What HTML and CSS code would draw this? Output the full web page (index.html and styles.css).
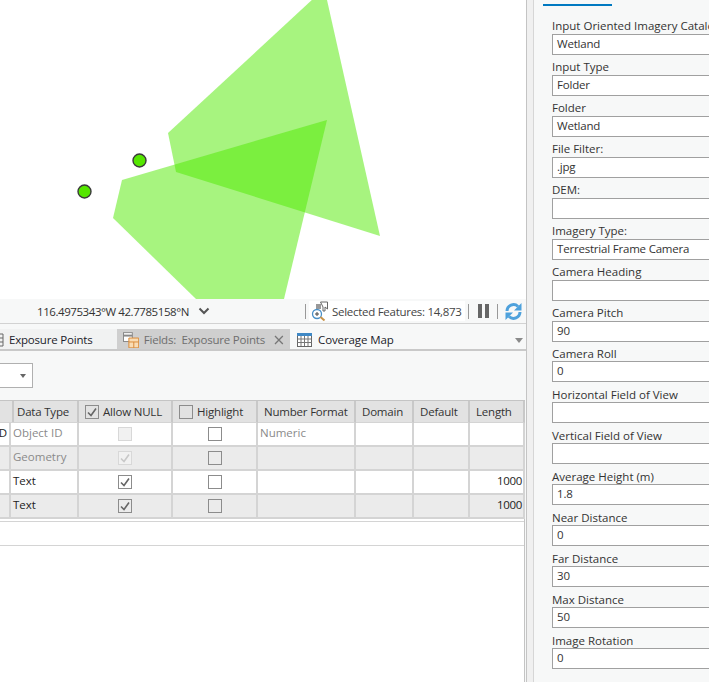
FILE: index.html
```html
<!DOCTYPE html>
<html lang="en">
<head>
<meta charset="utf-8">
<title>Fields: Exposure Points</title>
<link rel="stylesheet" href="styles.css">
</head>
<body>
<div class="app">
  <main class="main">
    <div class="map">
      <svg class="map-svg" width="526" height="299" viewBox="0 0 526 299">
        <polygon class="cov" points="168,133 314,-2 327,0 380,236 176,172"/>
        <polygon class="cov" points="122,180 327,120 284,299 196,299 113,218"/>
        <circle class="pt" cx="139.500" cy="160.500" r="6.500"/>
        <circle class="pt" cx="84.500" cy="191.500" r="6.500"/>
      </svg>
    </div>
    <div class="status">
      <span class="coords">116.4975343°W 42.7785158°N</span>
      <svg class="chev" width="12" height="8" viewBox="0 0 12 8"><path d="M1.500 1.500 6 6l4.500-4.500" fill="none" stroke="#555" stroke-width="2"/></svg>
      <span class="sep sep-a"></span>
      <span class="selected">
        <svg width="18" height="20" viewBox="0 0 18 20">
          <path d="M9.500 1h7v7l-2.500-2v4h-2V6z" fill="none" stroke="#666"/>
          <rect x="5" y="3" width="5" height="5" fill="#999"/>
          <circle cx="6" cy="13" r="4.500" fill="#fff" stroke="#4a90c8" stroke-width="1.300"/>
          <path d="M4 13h4M6 11v4" stroke="#444"/>
          <path d="M9.500 16l4 3.500" stroke="#c8934a" stroke-width="2"/>
        </svg>
        <span>Selected Features: 14,873</span>
      </span>
      <span class="sep"></span>
      <span class="pause"><i></i><i></i></span>
      <span class="sep"></span>
      <svg class="refresh" width="19" height="19" viewBox="0 0 19 19">
        <path d="M3 9A6.500 6.500 0 0 1 14 4.500M16 10A6.500 6.500 0 0 1 5 14.500" fill="none" stroke="#4ea1dc" stroke-width="3"/>
        <path d="M17.500 1V8.500H10zM1.500 18V10.500H9z" fill="#4ea1dc"/>
      </svg>
    </div>
    <div class="tabs">
      <div class="tab tab-first">
        <svg width="4" height="14" viewBox="0 0 4 14"><path d="M0 1h3v12H0M0 5h3M0 9h3" fill="none" stroke="#666"/></svg>
        <span>Exposure Points</span>
      </div>
      <div class="tab tab-active">
        <svg width="16" height="16" viewBox="0 0 16 16">
          <rect x="0.500" y="0.500" width="9" height="9" fill="#fff" stroke="#888"/>
          <path d="M.5 3.500h9" stroke="#888" stroke-width="2"/>
          <rect x="6" y="6" width="10" height="10" fill="#f9dcb4"/>
          <path d="M6 6h10v10H6zM6 10h10M11 10v6" fill="none" stroke="#d98b3a"/>
        </svg>
        <span class="tab-label">Fields:&nbsp; Exposure Points</span>
        <svg class="tab-x" width="10" height="10" viewBox="0 0 10 10"><path d="M1 1l8 8M9 1l-8 8" stroke="#777" stroke-width="1.300"/></svg>
      </div>
      <div class="tab tab-last">
        <svg width="15" height="14" viewBox="0 0 15 14">
          <rect x="0.500" y="0.500" width="14" height="13" fill="#fff" stroke="#666"/>
          <rect x="0" y="0" width="15" height="3" fill="#3f88c5"/>
          <path d="M0.500 6h14M0.500 9.500h14M4 3v10M7.500 3v10M11 3v10" stroke="#777"/>
        </svg>
        <span>Coverage Map</span>
      </div>
      <span class="tabs-menu"></span>
    </div>
    <div class="toolbar">
      <div class="combo"><span class="caret"></span></div>
    </div>
    <div class="grid">
      <div class="row head">
        <div class="cell"></div>
        <div class="cell">Data Type</div>
        <div class="cell"><span class="box"><svg width="12" height="12" viewBox="0 0 12 12"><path class="tick" d="M2 6.500l3 3 5-7"/></svg></span>Allow NULL</div>
        <div class="cell"><span class="box"></span>Highlight</div>
        <div class="cell">Number Format</div>
        <div class="cell">Domain</div>
        <div class="cell">Default</div>
        <div class="cell">Length</div>
      </div>
      <div class="row muted">
        <div class="cell clip">D</div>
        <div class="cell dim">Object ID</div>
        <div class="cell ctr"><span class="box box-off"></span></div>
        <div class="cell ctr"><span class="box"></span></div>
        <div class="cell dim">Numeric</div>
        <div class="cell"></div><div class="cell"></div><div class="cell"></div>
      </div>
      <div class="row alt muted">
        <div class="cell"></div>
        <div class="cell dim">Geometry</div>
        <div class="cell ctr"><span class="box box-off"><svg width="12" height="12" viewBox="0 0 12 12"><path class="tick tick-off" d="M2 6.500l3 3 5-7"/></svg></span></div>
        <div class="cell ctr"><span class="box"></span></div>
        <div class="cell"></div><div class="cell"></div><div class="cell"></div><div class="cell"></div>
      </div>
      <div class="row">
        <div class="cell"></div>
        <div class="cell">Text</div>
        <div class="cell ctr"><span class="box"><svg width="12" height="12" viewBox="0 0 12 12"><path class="tick" d="M2 6.500l3 3 5-7"/></svg></span></div>
        <div class="cell ctr"><span class="box"></span></div>
        <div class="cell"></div><div class="cell"></div><div class="cell"></div>
        <div class="cell num">1000</div>
      </div>
      <div class="row alt">
        <div class="cell"></div>
        <div class="cell">Text</div>
        <div class="cell ctr"><span class="box"><svg width="12" height="12" viewBox="0 0 12 12"><path class="tick" d="M2 6.500l3 3 5-7"/></svg></span></div>
        <div class="cell ctr"><span class="box"></span></div>
        <div class="cell"></div><div class="cell"></div><div class="cell"></div>
        <div class="cell num">1000</div>
      </div>
      <div class="new-row"></div>
    </div>
  </main>
  <div class="strip"></div>
  <aside class="pane">
    <div class="pane-tab"></div>
    <div class="form">
      <div class="field"><label>Input Oriented Imagery Catalog</label><div class="input">Wetland</div></div>
      <div class="field"><label>Input Type</label><div class="input">Folder</div></div>
      <div class="field"><label>Folder</label><div class="input">Wetland</div></div>
      <div class="field"><label>File Filter:</label><div class="input">.jpg</div></div>
      <div class="field"><label>DEM:</label><div class="input"></div></div>
      <div class="field"><label>Imagery Type:</label><div class="input">Terrestrial Frame Camera</div></div>
      <div class="field"><label>Camera Heading</label><div class="input"></div></div>
      <div class="field"><label>Camera Pitch</label><div class="input">90</div></div>
      <div class="field"><label>Camera Roll</label><div class="input">0</div></div>
      <div class="field"><label>Horizontal Field of View</label><div class="input"></div></div>
      <div class="field"><label>Vertical Field of View</label><div class="input"></div></div>
      <div class="field"><label>Average Height (m)</label><div class="input">1.8</div></div>
      <div class="field"><label>Near Distance</label><div class="input">0</div></div>
      <div class="field"><label>Far Distance</label><div class="input">30</div></div>
      <div class="field"><label>Max Distance</label><div class="input">50</div></div>
      <div class="field"><label>Image Rotation</label><div class="input">0</div></div>
    </div>
  </aside>
</div>
</body>
</html>
```
FILE: styles.css
```css
* { box-sizing: border-box; }
html, body { margin: 0; height: 100%; overflow: hidden; }
body { font-family: "Open Sans", "Noto Sans", sans-serif; font-size: 11.5px; color: #222; background: #fff; white-space: nowrap; }
.app { display: flex; width: 709px; height: 682px; overflow: hidden; }

.main { width: 527px; flex: none; display: flex; flex-direction: column; background: #f7f8f8; border-right: 1px solid #c4c4c4; }
.map { height: 299px; flex: none; background: #fff; overflow: hidden; }
.map-svg { display: block; }
.cov { fill: #50ea00; fill-opacity: .5; stroke: none; }
.pt { fill: #55e600; stroke: #3a3a3a; stroke-width: 1.400; }

.status { height: 25px; flex: none; display: flex; align-items: center; padding-left: 37px; border-bottom: 1px solid #d2d2d2; letter-spacing: -.28px; }
.coords { width: 161px; color: #333; letter-spacing: -.43px; }
.chev { margin-right: 95px; }
.sep { width: 1px; height: 15px; background: #999; flex: none; }
.selected { display: flex; align-items: center; gap: 3px; width: 156px; height: 20px; margin: 0 3px; padding-left: 2px; background: #fff; color: #444; }
.pause { display: flex; gap: 3px; margin: 0 8px 0 9px; }
.pause i { display: block; width: 4px; height: 14px; background: #666; }
.refresh { margin-left: 6px; }

.tabs { height: 27px; flex: none; display: flex; align-items: flex-end; position: relative; border-bottom: 2px solid #c9c9c9; }
.tab { display: flex; align-items: center; height: 20px; padding-top: 1px; letter-spacing: -.2px; }
.tab-first { width: 117px; gap: 5px; background: #f1f2f2; color: #1c1c2a; }
.tab-active { width: 173px; padding: 1px 6px 0; background: #cfcfcf; color: #6e6e6e; }
.tab-label { margin-left: 5px; width: 128px; }
.tab-x { margin-left: 5px; }
.tab-last { padding-left: 7px; gap: 6px; color: #1c1c2a; letter-spacing: -.1px; }
.tabs-menu { position: absolute; right: 3px; bottom: 6px; border: 4px solid transparent; border-top: 5px solid #8a8a8a; border-bottom: 0; }

.toolbar { height: 49px; flex: none; padding-top: 12px; }
.combo { width: 33px; height: 25px; background: #fff; border: 1px solid #b0b0b0; border-left: 0; position: relative; }
.caret { position: absolute; right: 6px; top: 10px; border: 3px solid transparent; border-top: 4px solid #666; border-bottom: 0; }

.grid { flex: 1; background: #fff; width: 525px; border-right: 1px solid #c4c4c4; }
.row { display: grid; grid-template-columns: 11px 68px 94px 85px 98px 58px 56px 55px; height: 24px; }
.row .cell { border-right: 2px solid #d4d4d4; border-bottom: 2px solid #d4d4d4; padding: 1px 2px 0; line-height: 17px; overflow: hidden; display: flex; align-items: flex-start; }
.head { height: 23px; background: #e2e2e2; border-top: 1px solid #c4c4c4; color: #333; letter-spacing: -.2px; }
.head .cell { border-color: #c8c8c8; align-items: center; padding: 0 6px; border-bottom: 1px solid #d4d4d4; }
.head .box { margin: 0 4px 0 0; }
.alt { background: #ebebeb; }
.dim { color: #8a8a8a; }
.row .clip { justify-content: flex-end; padding: 1px 2px 0 0; overflow: visible; }
.row .ctr { justify-content: center; padding-top: 4px; }
.row .num { justify-content: flex-end; padding-right: 1px; letter-spacing: -.3px; }
.box { width: 14px; height: 14px; border: 1px solid #8c8c8c; background: transparent; flex: none; display: flex; align-items: center; justify-content: center; }
.box-off { background: #f1f1f1; border-color: #d8d8d8; }
.tick { fill: none; stroke: #666; stroke-width: 1.600; }
.tick-off { stroke: #c8c8c8; }
.new-row { height: 25px; margin-top: 2px; border-top: 1px solid #d4d4d4; border-bottom: 1px solid #d4d4d4; }

.strip { width: 7px; flex: none; background: #f0f0f0; border-right: 1px solid #d6d6d6; }
.pane { flex: none; width: 175px; background: #f7f8f8; padding-left: 9px; overflow: hidden; }
.pane-tab { width: 69px; height: 2px; margin-top: 4px; background: #0079c1; }
.form { padding: 8px 0 0 9px; width: 300px; }
.field { height: 40.950px; display: flex; flex-direction: column; }
.field label { height: 19.950px; display: flex; align-items: flex-end; line-height: 14.500px; color: #333; }
.input { height: 21px; border: 1px solid #a0a0a0; background: #fff; padding-left: 4px; line-height: 18px; color: #333; letter-spacing: -.2px; }
```
